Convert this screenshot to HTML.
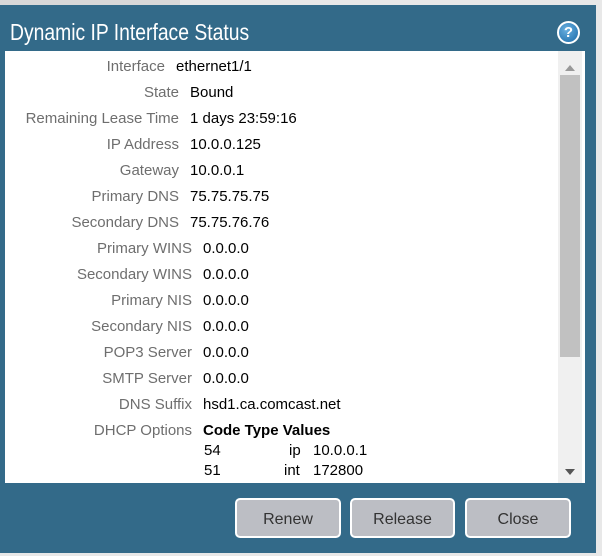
<!DOCTYPE html><html><head><style>
body{margin:0;width:602px;height:556px;background:#e8e8e8;position:relative;overflow:hidden;font-family:"Liberation Sans",sans-serif}
.dlg{position:absolute;left:0;top:5px;width:596px;height:548px;background:#336a89}
.title{position:absolute;left:10px;top:14px;color:#fff;font-size:23px;transform:scaleX(.84);transform-origin:left;white-space:nowrap}
.help{position:absolute;left:557px;top:16px;width:23px;height:23px;border-radius:50%;background:radial-gradient(circle at 40% 35%,#6ab0e0,#1a6aa8);border:2px solid #fff;color:#fff;font-weight:bold;font-size:15px;text-align:center;line-height:19px;box-sizing:border-box}
.body{position:absolute;left:5px;top:46px;width:580px;height:432px;background:#fff}
.sb{position:absolute;left:553px;top:0;width:24px;height:432px;background:#f0f0f0}
.th{position:absolute;left:2px;top:24px;width:20px;height:282px;background:#c1c1c1}
.r{position:absolute;font-size:15px;white-space:nowrap}
.l{color:#6e6e6e;text-align:right}
.v{color:#000}
.btn{position:absolute;top:498px;height:36px;border:2px solid #fff;border-radius:5px;background:#bcbec4;font-size:16px;color:#333;text-align:center;line-height:40px}
</style></head><body>
<div style="position:absolute;left:0;top:0;width:180px;height:5px;background:#d8d8d8"></div>
<div class="dlg">
<div class="title">Dynamic IP Interface Status</div>
<div class="help">?</div>
<div class="body">
<div class="sb"><div style="position:absolute;left:7px;top:14px;border:5px solid transparent;border-bottom:6px solid #999;border-top:0"></div><div class="th"></div><div style="position:absolute;left:7px;top:418px;border:5px solid transparent;border-top:6px solid #555;border-bottom:0"></div></div>
</div></div>
<div id="rows"></div>
<script>
var d=[["Interface","ethernet1/1",176],["State","Bound",190],["Remaining Lease Time","1 days 23:59:16",190],["IP Address","10.0.0.125",190],["Gateway","10.0.0.1",190],["Primary DNS","75.75.75.75",190],["Secondary DNS","75.75.76.76",190],["Primary WINS","0.0.0.0",203],["Secondary WINS","0.0.0.0",203],["Primary NIS","0.0.0.0",203],["Secondary NIS","0.0.0.0",203],["POP3 Server","0.0.0.0",203],["SMTP Server","0.0.0.0",203],["DNS Suffix","hsd1.ca.comcast.net",203],["DHCP Options","<b>Code Type Values</b>",203]];
var h="";d.forEach(function(r,i){var y=58+i*26;h+='<div class="r l" style="right:'+(602-(r[2]-11))+'px;top:'+y+'px">'+r[0]+'</div><div class="r v" style="left:'+r[2]+'px;top:'+y+'px">'+r[1]+'</div>';});
h+='<div class="r v" style="left:204px;top:442px">54</div><div class="r v" style="left:289px;top:442px">ip</div><div class="r v" style="left:313px;top:442px">10.0.0.1</div>';
h+='<div class="r v" style="left:204px;top:462px">51</div><div class="r v" style="left:284px;top:462px">int</div><div class="r v" style="left:313px;top:462px">172800</div>';
document.getElementById("rows").innerHTML=h;
</script>
<div class="btn" style="left:235px;width:102px">Renew</div>
<div class="btn" style="left:350px;width:101px">Release</div>
<div class="btn" style="left:465px;width:102px">Close</div>
</body></html>
